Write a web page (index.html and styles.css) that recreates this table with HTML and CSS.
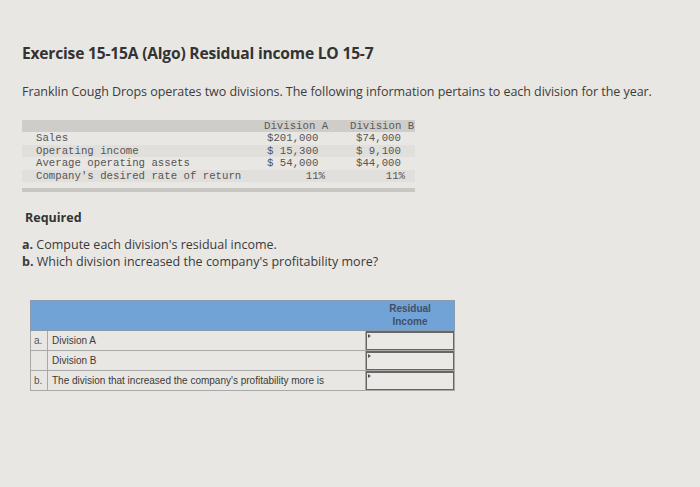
FILE: index.html
```html
<!DOCTYPE html>
<html>
<head>
<meta charset="utf-8">
<link rel="stylesheet" href="styles.css">
</head>
<body>
<div class="page">
  <h1 class="title">Exercise 15-15A (Algo) Residual income LO 15-7</h1>
  <p class="intro">Franklin Cough Drops operates two divisions. The following information pertains to each division for the year.</p>

  <div class="data">
    <div class="drow head"><span class="lbl"></span><span class="va">Division A</span><span class="vb">Division B</span></div>
    <div class="drow"><span class="lbl">Sales</span><span class="va">$201,000</span><span class="vb">$74,000</span></div>
    <div class="drow alt"><span class="lbl">Operating income</span><span class="va">$ 15,300</span><span class="vb">$ 9,100</span></div>
    <div class="drow"><span class="lbl">Average operating assets</span><span class="va">$ 54,000</span><span class="vb">$44,000</span></div>
    <div class="drow alt"><span class="lbl">Company's desired rate of return</span><span class="va pct">11%</span><span class="vb pct">11%</span></div>
    <div class="dfoot"></div>
  </div>

  <h2 class="req">Required</h2>
  <ol class="tasks">
    <li><b>a.</b> Compute each division's residual income.</li>
    <li><b>b.</b> Which division increased the company's profitability more?</li>
  </ol>

  <table class="answer">
    <tr class="ahead"><th colspan="2"></th><th class="rcol">Residual<br>Income</th></tr>
    <tr><td class="key">a.</td><td class="desc">Division A</td><td class="inp"><div class="box"></div></td></tr>
    <tr><td class="key"></td><td class="desc">Division B</td><td class="inp"><div class="box"></div></td></tr>
    <tr><td class="key">b.</td><td class="desc">The division that increased the company's profitability more is</td><td class="inp"><div class="box"></div></td></tr>
  </table>
</div>
</body>
</html>
```
FILE: styles.css
```css
html, body {
  margin: 0;
  padding: 0;
}
body {
  background: #e9e7e3;
  color: #3a3a3a;
  font-family: "Open Sans", "Liberation Sans", sans-serif;
  width: 700px;
  height: 487px;
  overflow: hidden;
}
.page {
  padding: 42px 0 0 22px;
}
.title {
  margin: 0;
  font-size: 15.6px;
  font-weight: 700;
  letter-spacing: -0.2px;
  color: #333;
  line-height: 22px;
}
.intro {
  margin: 19px 0 0 0;
  font-size: 12.5px;
  line-height: 18px;
  letter-spacing: -0.05px;
  color: #3c3c3c;
}
.data {
  margin-top: 19px;
  width: 393px;
  font-family: "Liberation Mono", "DejaVu Sans Mono", monospace;
  font-size: 10.7px;
  color: #555;
}
.drow {
  display: grid;
  grid-template-columns: 1fr 70px 64px;
  column-gap: 16px;
  height: 12.5px;
  line-height: 12.5px;
  padding-left: 14px;
  padding-right: 1px;
}
.drow.head {
  background: #cfcdca;
  height: 12px;
  line-height: 12px;
  color: #5a5a5a;
}
.drow.alt {
  background: #e1dfdb;
}
.drow .va, .drow .vb {
  white-space: pre;
}
.drow .va {
  padding-left: 3px;
}
.drow .vb {
  padding-left: 6px;
}
.drow.head .va, .drow.head .vb {
  padding-left: 0;
}
.drow .va.pct {
  text-align: right;
  padding-right: 9px;
}
.drow .vb.pct {
  text-align: right;
  padding-right: 9px;
}
.dfoot {
  height: 4px;
  margin-top: 6px;
  background: #c8c6c3;
}
.req {
  margin: 17px 0 0 3px;
  font-size: 12.5px;
  font-weight: 700;
  color: #333;
  line-height: 18px;
}
.tasks {
  list-style: none;
  margin: 9px 0 0 0;
  padding: 0;
  font-size: 12.5px;
  line-height: 17px;
  color: #3a3a3a;
}
.tasks b {
  font-weight: 700;
}
.answer {
  margin: 30px 0 0 8px;
  border-collapse: collapse;
  width: 425px;
  font-family: "Liberation Sans", Arial, sans-serif;
  font-size: 10px;
  color: #3a3a3a;
}
.answer td, .answer th {
  border: 1px solid #a8a8a8;
  padding: 0;
}
.ahead th {
  background: #72a3d6;
  height: 28px;
  border-color: #8a9bb0;
}
.ahead .rcol {
  width: 88px;
  font-weight: 700;
  font-size: 10px;
  line-height: 13px;
  color: #3f4f66;
  vertical-align: top;
  padding-top: 1px;
}
.answer tr td {
  height: 18px;
}
.key {
  width: 13px;
  padding-left: 3px !important;
  color: #555;
}
.desc {
  padding-left: 4px !important;
}
.inp {
  padding: 0 !important;
}
.box {
  height: 16px;
  border: 1px solid #666;
  border-top: 2px solid #666;
  background: #ebe9e6;
  position: relative;
}
.box::before {
  content: "";
  position: absolute;
  left: 1px;
  top: 1px;
  border-left: 3px solid #555;
  border-top: 2px solid transparent;
  border-bottom: 2px solid transparent;
}
```
